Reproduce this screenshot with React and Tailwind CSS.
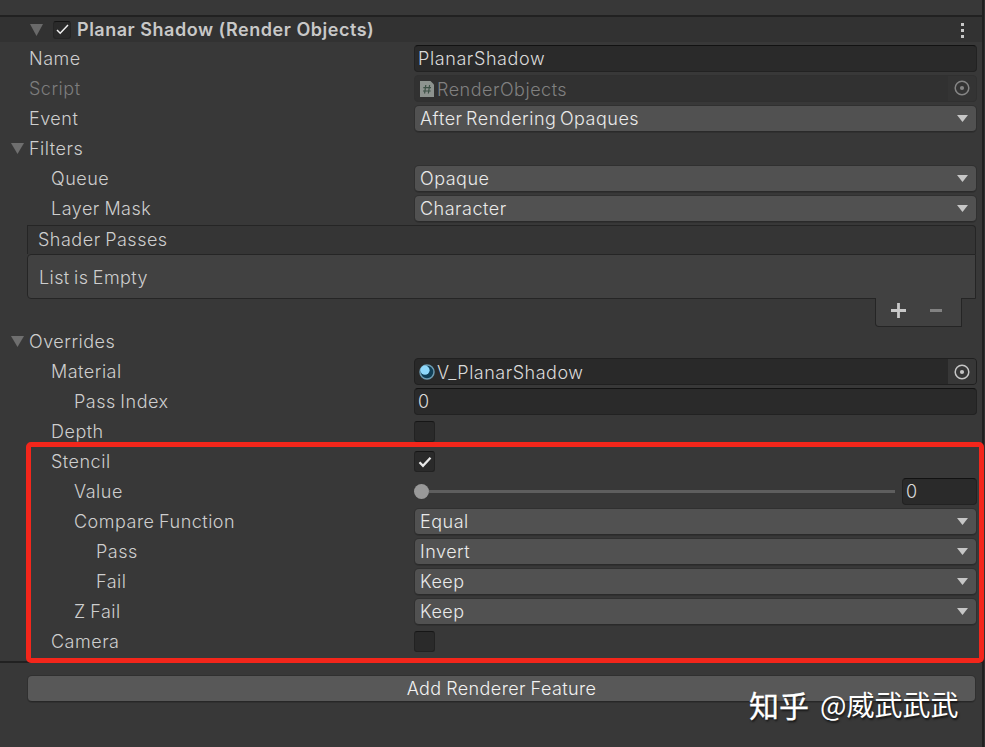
import React, { useState } from 'react';
import clsx from 'clsx';

const INDENTS = ['pl-[29px]', 'pl-[51px]', 'pl-[74px]', 'pl-[96px]'];

const Row = ({ label, indent = 0, foldout = false, muted = false, children }) => (
    <div className="flex h-[30px] items-start">
        <div className={clsx('relative w-[414px] shrink-0 leading-[31px]', INDENTS[indent], muted ? 'text-[#7d7d7d]' : 'text-[#cecece]')}>
            {foldout && <Triangle className="absolute left-[11px] top-[10px] h-[11px] w-[13px] text-[#6f6f6f]" />}
            {label}
        </div>
        {children}
    </div>
);

const Triangle = ({ className }) => (
    <svg viewBox="0 0 12 10" preserveAspectRatio="none" className={className}>
        <path d="M0 0H12L6 10Z" fill="currentColor" />
    </svg>
);

const TextField = ({ value }) => (
    <div className="mt-[2px] h-[27px] w-[563px] rounded-[4px] border border-[#222] border-t-[#121212] bg-[#2a2a2a] pl-[3px] leading-[25px] tracking-[0.6px] text-[#dadada]">
        {value}
    </div>
);

const Dropdown = ({ value }) => (
    <button className="ml-px mt-[3px] flex h-[26px] w-[561px] items-center justify-between rounded-[4px] border-b border-[#2a2a2a] bg-[#515151] pl-[5px] pr-[8px] text-left leading-[25px] text-[#eaeaea] shadow-[0_0_0_1px_#303030] [word-spacing:-2px]">
        {value}
        <Triangle className="h-[7px] w-[11px] text-[#c6c6c6]" />
    </button>
);

const ObjectField = ({ icon, value, muted = false }) => (
    <div
        className={clsx(
            'mt-[2px] flex h-[27px] w-[563px] items-center rounded-[4px] border leading-[25px]',
            muted ? 'border-[#303030] bg-[#313131] text-[#808080]' : 'border-[#202020] bg-[#292929] text-[#dadada]'
        )}
    >
        {icon}
        <span className="grow pt-px">{value}</span>
        <span className={clsx('flex h-[25px] w-[28px] items-center justify-center rounded-r-[3px]', muted ? 'bg-[#343434] pb-px text-[#858585]' : 'bg-[#373737] text-[#c6c6c6]')}>
            <svg viewBox="0 0 16 16" className="size-[16px]">
                <circle cx="8" cy="8" r="6.8" fill="none" stroke="currentColor" strokeWidth="1.5" />
                <circle cx="8" cy="8" r="2.1" fill="currentColor" />
            </svg>
        </span>
    </div>
);

const Checkbox = ({ defaultChecked = false }) => {
    const [checked, setChecked] = useState(defaultChecked);

    return (
        <button
            onClick={() => setChecked(!checked)}
            className="mt-[5px] flex size-[21px] items-center justify-center rounded-[3px] border border-[#222] border-t-[#161616] bg-[#2a2a2a]"
        >
            {checked && (
                <svg viewBox="0 0 14 12" className="h-[12px] w-[14px]">
                    <path d="M1.5 6.2L5 9.8L12.5 1.8" fill="none" stroke="#e8e8e8" strokeWidth="2.3" />
                </svg>
            )}
        </button>
    );
};

const ScriptIcon = () => (
    <svg viewBox="0 0 14 16" className="ml-[5px] mr-[3px] mt-px h-[16px] w-[14px] shrink-0">
        <path d="M0 0H10.5L14 3.5V16H0Z" fill="#8d938f" />
        <path d="M5.8 4L4.6 12.5M9.6 4L8.4 12.5M3.3 6.7H11M3 10H10.7" fill="none" stroke="#3d5146" strokeWidth="1.2" />
    </svg>
);

const MaterialIcon = () => (
    <svg viewBox="0 0 16 16" className="ml-[4px] mr-[2px] size-[16px] shrink-0">
        <circle cx="8" cy="8" r="7" fill="#0f3e56" stroke="#6d9bb1" strokeWidth="1.5" />
        <circle cx="6" cy="6.2" r="4.6" fill="#8ed8fb" />
    </svg>
);

const App = () => {
    return (
        <div className="relative flex h-[747px] w-[985px] overflow-hidden bg-[#383838] font-['Inter',sans-serif] text-[18px] font-light tracking-[0.5px] [word-spacing:-1px]">
            <div className="flex w-[982px] shrink-0 flex-col">
                <div className="h-[15px] shrink-0" />

                {/* Component header */}
                <div className="flex h-[27px] shrink-0 items-center border-t-2 border-[#212121] bg-[#323232]">
                    <Triangle className="ml-[30px] h-[12px] w-[13px] text-[#6a6a6a]" />
                    <div className="ml-[10px] flex size-[18px] items-center justify-center rounded-[3px] border border-[#252525] border-t-[#141414] bg-[#2a2a2a]">
                        <svg viewBox="0 0 14 12" className="h-[11px] w-[13px]">
                            <path d="M1 6.5L4.5 10L13 1" fill="none" stroke="#f0f0f0" strokeWidth="1.6" />
                        </svg>
                    </div>
                    <span className="ml-[6px] grow font-semibold tracking-[0.52px] text-[#c8c8c8] [word-spacing:0px]">Planar Shadow (Render Objects)</span>
                    <div className="mr-[18px] mt-[2px] flex flex-col gap-[3px]">
                        <i className="size-[3px] bg-[#c8c8c8]" />
                        <i className="size-[3px] bg-[#c8c8c8]" />
                        <i className="size-[3px] bg-[#c8c8c8]" />
                    </div>
                </div>

                <div className="pt-px">
                    <Row label="Name"><TextField value="PlanarShadow" /></Row>
                    <Row label="Script" muted><ObjectField icon={<ScriptIcon />} value="RenderObjects" muted /></Row>
                    <Row label="Event"><Dropdown value="After Rendering Opaques" /></Row>
                    <Row label="Filters" foldout />
                    <Row label="Queue" indent={1}><Dropdown value="Opaque" /></Row>
                    <Row label="Layer Mask" indent={1}><Dropdown value="Character" /></Row>
                </div>

                {/* Shader pass list */}
                <div className="ml-[27px] mt-[2px] flex w-[949px] flex-col text-[#cecece]">
                    <div className="h-[29px] rounded-tr-[4px] border border-b-0 border-[#252525] bg-[#353535] pl-[10px] leading-[28px]">
                        Shader Passes
                    </div>
                    <div className="h-[45px] rounded-l-[4px] border border-[#252525] bg-[#414141] pl-[11px] leading-[46px] tracking-[0.4px]">
                        List is Empty
                    </div>
                    <div className="z-10 -mt-px mr-[14px] flex h-[29px] w-[87px] items-center gap-[24px] self-end rounded-bl-[4px] border border-t-0 border-[#252525] bg-[#414141] pb-[4px] pl-[15px]">
                        <svg viewBox="0 0 15 15" className="size-[15px]">
                            <path d="M7.5 0V15M0 7.5H15" stroke="#c8c8c8" strokeWidth="2.8" />
                        </svg>
                        <i className="h-[3px] w-[12px] bg-[#828282]" />
                    </div>
                </div>

                <div className="-mt-px">
                    <Row label="Overrides" foldout />
                    <Row label="Material" indent={1}><ObjectField icon={<MaterialIcon />} value="V_PlanarShadow" /></Row>
                    <Row label="Pass Index" indent={2}><TextField value="0" /></Row>
                    <Row label="Depth" indent={1}><Checkbox /></Row>
                    <Row label="Stencil" indent={1}><Checkbox defaultChecked /></Row>
                    <Row label="Value" indent={2}>
                        <div className="flex h-[30px] w-[481px] items-center">
                            <i className="size-[15px] rounded-full bg-[#999]" />
                            <i className="h-[3px] grow bg-[#5e5e5e]" />
                        </div>
                        <div className="ml-[7px] mt-[2px] h-[27px] w-[75px] rounded-[4px] border border-[#222] border-t-[#121212] bg-[#2a2a2a] pl-[3px] leading-[25px] text-[#dadada]">
                            0
                        </div>
                    </Row>
                    <Row label="Compare Function" indent={2}><Dropdown value="Equal" /></Row>
                    <Row label="Pass" indent={3}><Dropdown value="Invert" /></Row>
                    <Row label="Fail" indent={3}><Dropdown value="Keep" /></Row>
                    <Row label="Z Fail" indent={2}><Dropdown value="Keep" /></Row>
                    <Row label="Camera" indent={1}><Checkbox /></Row>
                </div>

                <div className="mt-[5px] border-t-2 border-[#212121] pt-[12px]">
                    <button className="ml-[28px] h-[26px] w-[947px] rounded-[4px] border-b border-[#272727] bg-[#585858] text-center leading-[25px] tracking-[0.4px] text-[#f2f2f2] shadow-[0_0_0_1px_#303030] [word-spacing:-0.8px]">
                        Add Renderer Feature
                    </button>
                </div>
            </div>
            <div className="w-[3px] border-l-2 border-[#202020] bg-[#303030]" />

            {/* Highlight around the stencil settings */}
            <div className="pointer-events-none absolute left-[26px] top-[442px] h-[221px] w-[958px] rounded-[5px] border-[5px] border-[#f3261b]" />

            <div className="pointer-events-none absolute left-[749px] top-[684px] flex items-center whitespace-nowrap font-['Noto_Sans_CJK_SC',sans-serif] font-normal leading-[40px] tracking-normal text-white [text-shadow:1px_2px_2px_rgba(0,0,0,0.6)]">
                <span className="text-[30px] [-webkit-text-stroke:0.3px_white]">知乎</span>
                <span className="ml-[11px] text-[28px]">@威武武武</span>
            </div>
        </div>
    );
};

export default App;
